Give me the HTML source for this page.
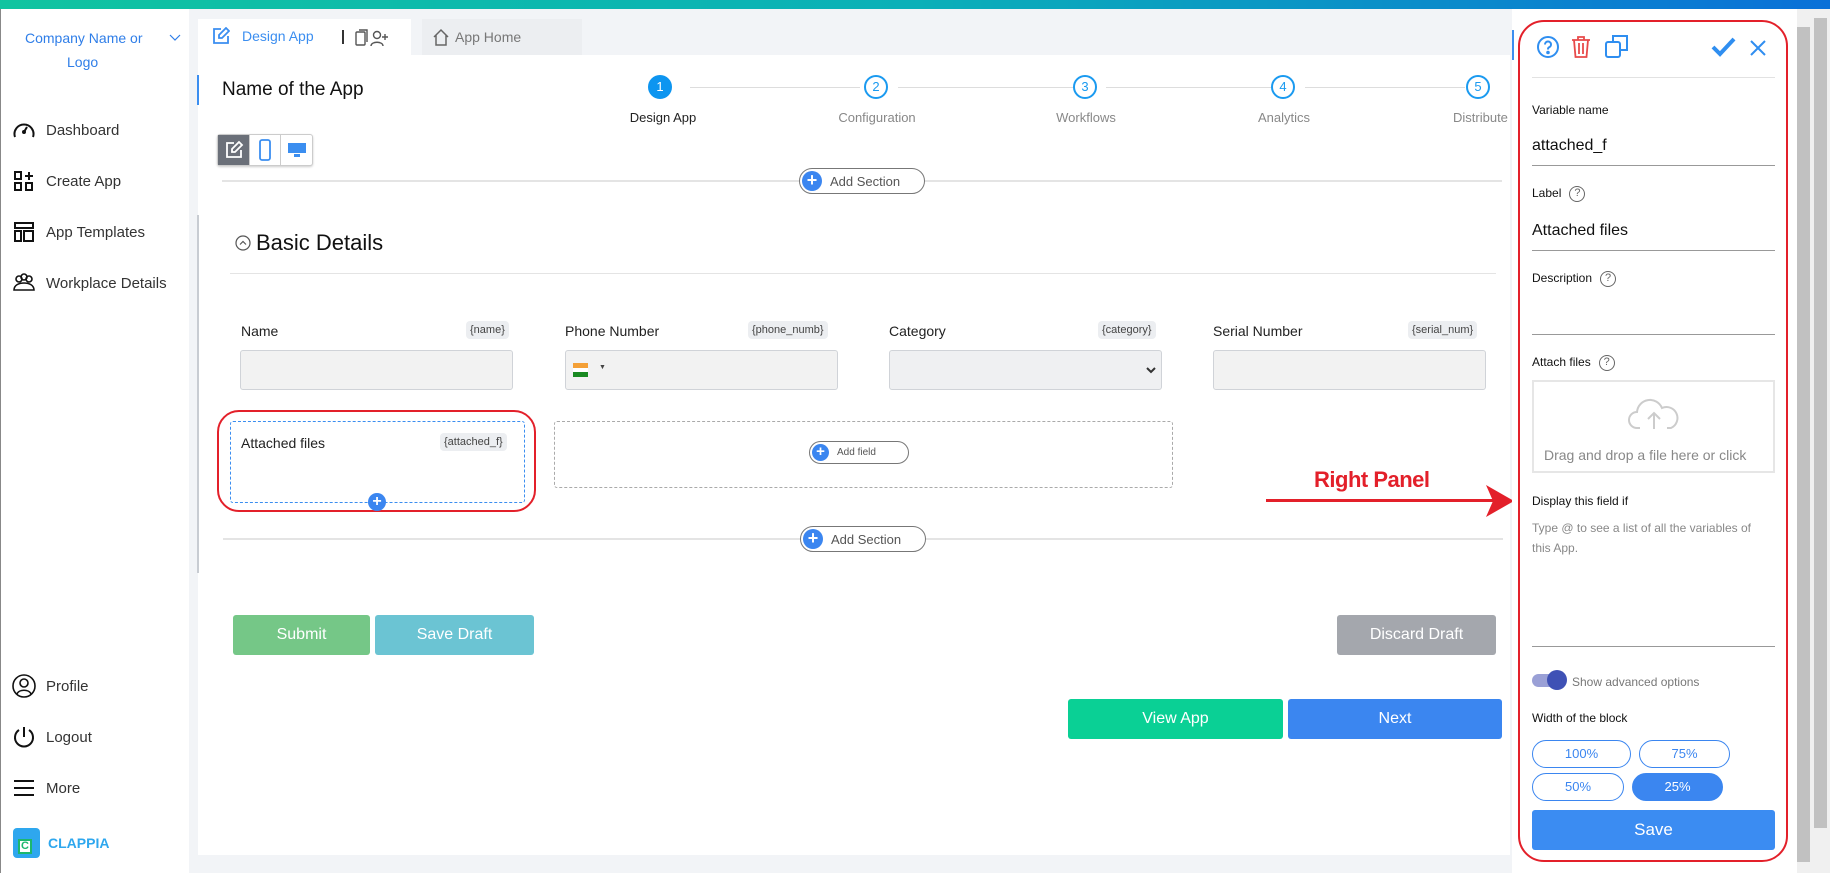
<!DOCTYPE html>
<html><head><meta charset="utf-8"><style>
*{box-sizing:border-box;margin:0;padding:0}
body{width:1830px;height:873px;overflow:hidden;position:relative;background:#f2f4f7;font-family:"Liberation Sans",sans-serif;color:#222}
.a{position:absolute}
.t{position:absolute;white-space:nowrap}
.nav{position:absolute;left:12px;font-size:15px;color:#333;display:flex;align-items:center}
.nav svg{width:24px;height:24px;margin-right:10px}
.lbl{font-size:14px;color:#222}
.tag{position:absolute;background:#eceef1;border-radius:4px;font-size:11px;color:#444;padding:3px 4px}
.inp{position:absolute;background:#f2f2f2;border:1px solid #d0d3d8;border-radius:3px}
.step{position:absolute;width:24px;height:24px;border-radius:50%;border:2px solid #1a9af0;color:#1a9af0;font-size:13px;text-align:center;line-height:20px;background:#fff}
.stl{position:absolute;font-size:13px;color:#888;transform:translateX(-50%);white-space:nowrap}
.addsec{position:absolute;height:26px;border:1px solid #777;border-radius:13px;background:#fff;font-size:13px;color:#555;display:flex;align-items:center;padding-left:2px}
.plus{width:20px;height:20px;border-radius:50%;background:#3b86f0;color:#fff;font-weight:bold;font-size:18px;line-height:19px;text-align:center;margin-right:8px}
.btn{position:absolute;color:#fff;font-size:16px;text-align:center;border-radius:3px}
.pl{font-size:14px;color:#111;position:absolute;left:1532px}
.ul{position:absolute;left:1532px;width:243px;height:1px;background:#999}
.q{display:inline-block;width:16px;height:16px;border:1.5px solid #666;border-radius:50%;font-size:11px;text-align:center;line-height:13px;color:#666;margin-left:8px;vertical-align:middle}
.pill{position:absolute;height:28px;border:1.5px solid #3b86f0;border-radius:14px;color:#3b86f0;font-size:13px;text-align:center;line-height:25px;background:#fff}
</style></head><body>
<div class="a" style="left:0;top:0;width:1830px;height:9px;background:linear-gradient(90deg,#10c4a0,#0ab0b8 50%,#0a70d8)"></div>
<div class="a" style="left:0;top:9px;width:1px;height:864px;background:#888"></div>
<div class="a" style="left:1px;top:9px;width:188px;height:864px;background:#fff"></div>
<div class="t" style="left:25px;top:30px;font-size:14px;color:#2f7ee8">Company Name or</div>
<div class="t" style="left:67px;top:54px;font-size:14px;color:#2f7ee8">Logo</div>
<svg class="a" style="left:169px;top:34px" width="12" height="8"><path d="M1 1l5 5 5-5" fill="none" stroke="#2f7ee8" stroke-width="1.2"/></svg>
<div class="nav" style="top:118px"><svg viewBox="0 0 24 24" fill="none" stroke="#111" stroke-width="2"><path d="M3 19a9.5 9.5 0 1 1 18 0"/><path d="M12 14l3-5"/><circle cx="12" cy="14" r="1" fill="#111"/></svg>Dashboard</div>
<div class="nav" style="top:169px"><svg viewBox="0 0 24 24" fill="none" stroke="#111" stroke-width="2"><rect x="3" y="3" width="6" height="7"/><rect x="3" y="14" width="6" height="7"/><rect x="14" y="14" width="6" height="7"/><path d="M17 3v8M13 7h8"/></svg>Create App</div>
<div class="nav" style="top:220px"><svg viewBox="0 0 24 24" fill="none" stroke="#111" stroke-width="2"><rect x="3" y="3" width="18" height="5"/><rect x="3" y="11" width="6" height="10"/><rect x="12" y="11" width="9" height="10"/></svg>App Templates</div>
<div class="nav" style="top:271px"><svg viewBox="0 0 24 24" fill="none" stroke="#111" stroke-width="1.6"><circle cx="7" cy="8" r="3"/><circle cx="12" cy="6" r="3"/><circle cx="17" cy="8" r="3"/><path d="M2 19c0-5 5-7 10-7s10 2 10 7z"/></svg>Workplace Details</div>
<div class="nav" style="top:674px"><svg viewBox="0 0 24 24" fill="none" stroke="#111" stroke-width="1.6"><circle cx="12" cy="12" r="11"/><circle cx="12" cy="9" r="4"/><path d="M5 20c2-5 12-5 14 0"/></svg>Profile</div>
<div class="nav" style="top:725px"><svg viewBox="0 0 24 24" fill="none" stroke="#111" stroke-width="2"><path d="M7 5a9 9 0 1 0 10 0M12 2v10"/></svg>Logout</div>
<div class="nav" style="top:776px"><svg viewBox="0 0 24 24" fill="none" stroke="#111" stroke-width="2"><path d="M2 5h20M2 12h20M2 19h20"/></svg>More</div>
<div class="a" style="left:13px;top:828px;width:27px;height:30px;background:#2ea7ee;border-radius:4px"></div>
<div class="a" style="left:18px;top:839px;width:14px;height:15px;background:#fff;border:2px solid #1cb76e;font-size:11px;font-weight:bold;color:#1cb76e;line-height:11px;text-align:center">C</div>
<div class="t" style="left:48px;top:835px;font-size:14px;font-weight:bold;color:#2ea7ee">CLAPPIA</div>

<div class="a" style="left:198px;top:19px;width:213px;height:36px;background:#fff"></div>
<svg class="a" style="left:212px;top:27px" width="18" height="18" viewBox="0 0 18 18" fill="none" stroke="#3b8ef0" stroke-width="1.8"><path d="M9 2H2v14h14V9"/><path d="M14 1l3 3-7 7H7V8z"/></svg>
<div class="t" style="left:242px;top:28px;font-size:14px;color:#3b8ef0">Design App</div>
<div class="a" style="left:342px;top:30px;width:2px;height:14px;background:#333"></div>
<svg class="a" style="left:355px;top:29px" width="36" height="18" fill="none" stroke="#555" stroke-width="1.4"><rect x="1" y="3" width="9" height="13" rx="1"/><path d="M4 1h8v12"/><circle cx="22" cy="6" r="3.5"/><path d="M16 17c0-5 12-5 12 0M30 5v6M27 8h6"/></svg>
<div class="a" style="left:422px;top:19px;width:160px;height:36px;background:#eceef1"></div>
<svg class="a" style="left:432px;top:28px" width="18" height="18" fill="none" stroke="#666" stroke-width="1.5"><path d="M2 9l7-7 7 7M4 7v10h10V7"/></svg>
<div class="t" style="left:455px;top:29px;font-size:14px;color:#777">App Home</div>

<div class="a" style="left:198px;top:55px;width:1312px;height:800px;background:#fff"></div>
<div class="a" style="left:197px;top:75px;width:2px;height:30px;background:#3b8ef0"></div>
<div class="t" style="left:222px;top:79px;font-size:19px;color:#111">Name of the App</div>
<div class="a" style="left:690px;top:87px;width:170px;height:1px;background:#ddd"></div>
<div class="a" style="left:898px;top:87px;width:175px;height:1px;background:#ddd"></div>
<div class="a" style="left:1106px;top:87px;width:165px;height:1px;background:#ddd"></div>
<div class="a" style="left:1305px;top:87px;width:160px;height:1px;background:#ddd"></div>
<div class="step" style="left:648px;top:75px;background:#0d95f0;border-color:#0d95f0;color:#fff">1</div>
<div class="step" style="left:864px;top:75px">2</div>
<div class="step" style="left:1073px;top:75px">3</div>
<div class="step" style="left:1271px;top:75px">4</div>
<div class="step" style="left:1466px;top:75px">5</div>
<div class="stl" style="left:663px;top:110px;color:#222">Design App</div>
<div class="stl" style="left:877px;top:110px">Configuration</div>
<div class="stl" style="left:1086px;top:110px">Workflows</div>
<div class="stl" style="left:1284px;top:110px">Analytics</div>
<div class="t" style="left:1453px;top:110px;font-size:13px;color:#888">Distribute</div>

<div class="a" style="left:217px;top:134px;width:96px;height:32px;border:1px solid #ccc;border-radius:3px;background:#fff;box-shadow:0 1px 2px #ccc"></div>
<div class="a" style="left:218px;top:135px;width:31px;height:30px;background:#6b7079"></div>
<svg class="a" style="left:224px;top:140px" width="20" height="20" fill="none" stroke="#fff" stroke-width="1.8"><path d="M10 3H3v14h14v-7"/><path d="M15 2l3 3-7 7H8V9z"/></svg>
<div class="a" style="left:249px;top:135px;width:1px;height:30px;background:#ccc"></div>
<div class="a" style="left:280px;top:135px;width:1px;height:30px;background:#ccc"></div>
<svg class="a" style="left:258px;top:139px" width="14" height="22" fill="none" stroke="#3b8ef0" stroke-width="1.8"><rect x="2" y="1" width="10" height="20" rx="2"/></svg>
<svg class="a" style="left:287px;top:142px" width="20" height="16"><rect x="1" y="1" width="18" height="10" fill="#3b8ef0"/><rect x="7" y="12" width="6" height="3" fill="#3b8ef0"/></svg>

<div class="a" style="left:222px;top:180px;width:1280px;height:2px;background:#e4e4e4"></div>
<div class="addsec" style="left:799px;top:168px;width:126px"><div class="plus">+</div>Add Section</div>

<div class="a" style="left:197px;top:215px;width:2px;height:358px;background:#c8ccd2"></div>
<svg class="a" style="left:235px;top:235px" width="16" height="16" fill="none" stroke="#555" stroke-width="1.2"><circle cx="8" cy="8" r="7"/><path d="M5 9.5l3-3 3 3"/></svg>
<div class="t" style="left:256px;top:230px;font-size:22px;color:#111">Basic Details</div>
<div class="a" style="left:230px;top:273px;width:1266px;height:1px;background:#e4e4e4"></div>

<div class="t lbl" style="left:241px;top:323px">Name</div><div class="tag" style="left:466px;top:321px">{name}</div>
<div class="inp" style="left:240px;top:350px;width:273px;height:40px"></div>
<div class="t lbl" style="left:565px;top:323px">Phone Number</div><div class="tag" style="left:748px;top:321px">{phone_numb}</div>
<div class="inp" style="left:565px;top:350px;width:273px;height:40px"></div>
<div class="a" style="left:573px;top:363px;width:15px;height:5px;background:#f4a037"></div><div class="a" style="left:573px;top:368px;width:15px;height:4px;background:#fff"></div><div class="a" style="left:573px;top:372px;width:15px;height:5px;background:#1a8a22"></div>
<div class="t" style="left:599px;top:364px;font-size:7px;color:#444">▼</div>
<div class="t lbl" style="left:889px;top:323px">Category</div><div class="tag" style="left:1098px;top:321px">{category}</div>
<div class="inp" style="left:889px;top:350px;width:273px;height:40px;background:#eff0f2"></div>
<svg class="a" style="left:1146px;top:366px" width="10" height="8" fill="none" stroke="#333" stroke-width="2"><path d="M1 2l4 4 4-4"/></svg>
<div class="t lbl" style="left:1213px;top:323px">Serial Number</div><div class="tag" style="left:1408px;top:321px">{serial_num}</div>
<div class="inp" style="left:1213px;top:350px;width:273px;height:40px"></div>

<div class="a" style="left:217px;top:410px;width:319px;height:102px;border:2px solid #e3202a;border-radius:22px"></div>
<div class="a" style="left:230px;top:421px;width:295px;height:82px;border:1px dashed #3b8ef0;border-radius:3px"></div>
<div class="t lbl" style="left:241px;top:435px">Attached files</div><div class="tag" style="left:440px;top:433px">{attached_f}</div>
<div class="a" style="left:368px;top:493px;width:18px;height:18px;border-radius:50%;background:#3b86f0;color:#fff;font-weight:bold;text-align:center;line-height:17px;font-size:16px">+</div>
<div class="a" style="left:554px;top:421px;width:619px;height:67px;border:1px dashed #aaa;border-radius:3px"></div>
<div class="addsec" style="left:809px;top:441px;width:100px;height:23px;font-size:10px"><div class="plus" style="width:17px;height:17px;font-size:15px;line-height:16px">+</div>Add field</div>

<div class="a" style="left:223px;top:538px;width:1280px;height:2px;background:#e4e4e4"></div>
<div class="addsec" style="left:800px;top:526px;width:126px"><div class="plus">+</div>Add Section</div>

<div class="btn" style="left:233px;top:615px;width:137px;height:40px;line-height:40px;background:#75c787">Submit</div>
<div class="btn" style="left:375px;top:615px;width:159px;height:40px;line-height:40px;background:#6bc4d3">Save Draft</div>
<div class="btn" style="left:1337px;top:615px;width:159px;height:40px;line-height:40px;background:#a4a7ad">Discard Draft</div>
<div class="btn" style="left:1068px;top:699px;width:215px;height:40px;line-height:40px;background:#0ad095">View App</div>
<div class="btn" style="left:1288px;top:699px;width:214px;height:40px;line-height:40px;background:#3b86f0">Next</div>

<div class="t" style="left:1314px;top:467px;font-size:22px;font-weight:bold;color:#e3202a;letter-spacing:-0.5px">Right Panel</div>
<div class="a" style="left:1266px;top:499px;width:230px;height:3px;background:#e3202a"></div>
<svg class="a" style="left:1486px;top:485px" width="28" height="32"><path d="M0 0L28 16L0 32L7 16z" fill="#e3202a"/></svg>

<div class="a" style="left:1512px;top:9px;width:285px;height:864px;background:#fff"></div>
<div class="a" style="left:1512px;top:30px;width:2px;height:30px;background:#3b8ef0"></div>
<div class="a" style="left:1797px;top:9px;width:33px;height:864px;background:#f0f0f0"></div>
<div class="a" style="left:1797px;top:27px;width:13px;height:835px;background:#c1c1c1"></div>
<div class="a" style="left:1814px;top:18px;width:13px;height:810px;background:#c1c1c1"></div>
<div class="a" style="left:1518px;top:20px;width:270px;height:842px;border:2px solid #e3202a;border-radius:26px"></div>

<svg class="a" style="left:1536px;top:35px" width="24" height="24" fill="none" stroke="#2f8ef0" stroke-width="2"><circle cx="12" cy="12" r="10"/><path d="M9 9.5a3 3 0 1 1 4 2.8c-1 .4-1 1-1 2.2"/><circle cx="12" cy="17.5" r=".8" fill="#2f8ef0"/></svg>
<svg class="a" style="left:1569px;top:35px" width="24" height="24" fill="none" stroke="#e84a4a" stroke-width="1.8"><path d="M3 5h18M9 5V2h6v3M5 5l1.5 17h11L19 5M10 8v11M14 8v11"/></svg>
<svg class="a" style="left:1605px;top:34px" width="25" height="25" fill="none" stroke="#2f8ef0" stroke-width="2"><rect x="1" y="8" width="14" height="15" rx="2"/><path d="M8 8V2h14v14h-7"/></svg>
<svg class="a" style="left:1711px;top:37px" width="25" height="20" fill="none" stroke="#2f8ef0" stroke-width="4"><path d="M2 10l7 7L23 2"/></svg>
<svg class="a" style="left:1750px;top:40px" width="16" height="16" fill="none" stroke="#2f8ef0" stroke-width="2"><path d="M1 1l14 14M15 1L1 15"/></svg>
<div class="a" style="left:1532px;top:77px;width:243px;height:1px;background:#e2e2e2"></div>

<div class="t pl" style="top:103px;font-size:12px">Variable name</div>
<div class="t pl" style="top:137px;font-size:16px">attached_f</div>
<div class="ul" style="top:165px"></div>
<div class="t pl" style="top:186px;font-size:12px">Label<span class="q">?</span></div>
<div class="t pl" style="top:222px;font-size:16px">Attached files</div>
<div class="ul" style="top:250px"></div>
<div class="t pl" style="top:271px;font-size:12px">Description<span class="q">?</span></div>
<div class="ul" style="top:334px"></div>
<div class="t pl" style="top:355px;font-size:12px">Attach files<span class="q">?</span></div>
<div class="a" style="left:1532px;top:380px;width:243px;height:93px;border:2px solid #e6e6e6"></div>
<svg class="a" style="left:1628px;top:397px" width="52" height="34" fill="none" stroke="#ccc" stroke-width="2"><path d="M12 31H9a8 8 0 0 1 0-16 13 13 0 0 1 25-4 10 10 0 0 1 9 20h-4"/><path d="M26 32V16M20 22l6-6 6 6"/></svg>
<div class="t" style="left:1544px;top:447px;font-size:14px;color:#888">Drag and drop a file here or click</div>
<div class="t pl" style="top:494px;font-size:12px">Display this field if</div>
<div class="a" style="left:1532px;top:518px;width:232px;font-size:12px;color:#888;line-height:20px">Type @ to see a list of all the variables of this App.</div>
<div class="ul" style="top:646px"></div>
<div class="a" style="left:1532px;top:674px;width:28px;height:13px;border-radius:7px;background:#9aa0d6"></div>
<div class="a" style="left:1547px;top:670px;width:20px;height:20px;border-radius:50%;background:#3f51b5"></div>
<div class="t" style="left:1572px;top:675px;font-size:12px;color:#777">Show advanced options</div>
<div class="t pl" style="top:711px;font-size:12px">Width of the block</div>
<div class="pill" style="left:1532px;top:740px;width:99px">100%</div>
<div class="pill" style="left:1639px;top:740px;width:91px">75%</div>
<div class="pill" style="left:1532px;top:773px;width:92px">50%</div>
<div class="pill" style="left:1632px;top:773px;width:91px;background:#3b86f0;color:#fff">25%</div>
<div class="btn" style="left:1532px;top:810px;width:243px;height:40px;line-height:40px;background:#3b8cf2;font-size:17px">Save</div>
</body></html>
